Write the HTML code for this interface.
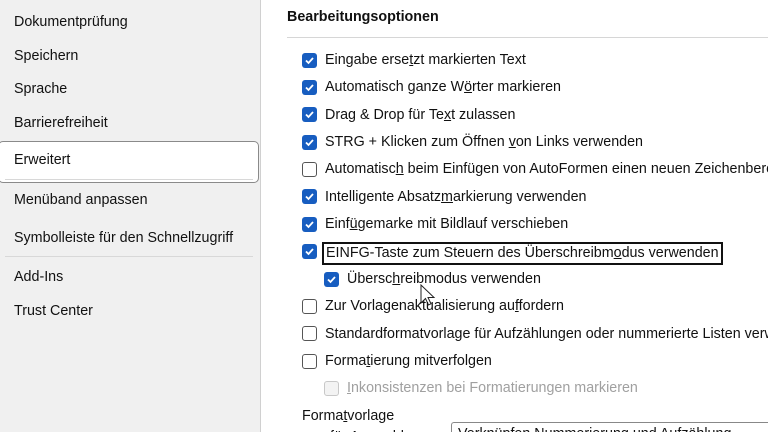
<!DOCTYPE html>
<html><head><meta charset="utf-8"><style>
*{margin:0;padding:0;box-sizing:border-box}
html,body{width:768px;height:432px;overflow:hidden}
body{background:#fff;font-family:"Segoe UI","Liberation Sans",sans-serif;font-size:14px;color:#111;position:relative}
#wrap{position:absolute;left:0;top:0;width:768px;height:432px;overflow:hidden}
#side{position:absolute;left:0;top:0;width:261px;height:432px;background:#f0f0f0;border-right:1px solid #d0d0d0}
.si{position:absolute;left:14px;font-size:14.3px;white-space:nowrap}
.sel{position:absolute;left:-2px;top:141px;width:261px;height:42px;background:#fff;border:1px solid #8a8a8a;border-radius:5px}
.sep{position:absolute;left:5px;width:248px;height:1px;background:#d8d8d8}
h3{position:absolute;left:287px;top:9px;font-size:14.3px;font-weight:bold}
.hl{position:absolute;left:287px;top:37px;width:481px;height:1px;background:#d6d6d6}
.r{position:absolute;white-space:nowrap;font-size:14.3px;line-height:18px}
.cb{position:absolute;width:15px;height:15px;border-radius:3px;background:#175dc0}
.cb svg{position:absolute;left:2px;top:2px}
.cu{position:absolute;width:15px;height:15px;border-radius:3px;border:1px solid #555;background:#fff}
.cd{border-color:#c8c8c8;background:#f3f3f3}
u{text-decoration:underline}
</style></head><body><div id="wrap">
<div id="side">
<div class="si" style="top:14px">Dokumentprüfung</div>
<div class="si" style="top:48px">Speichern</div>
<div class="si" style="top:81px">Sprache</div>
<div class="si" style="top:115px">Barrierefreiheit</div>
<div class="sel"></div>
<div class="si" style="top:152px">Erweitert</div>
<div class="sep" style="top:179px"></div>
<div class="si" style="top:192px">Menüband anpassen</div>
<div class="si" style="top:230px">Symbolleiste für den Schnellzugriff</div>
<div class="sep" style="top:256px"></div>
<div class="si" style="top:269px">Add-Ins</div>
<div class="si" style="top:303px">Trust Center</div>
</div>
<h3>Bearbeitungsoptionen</h3>
<div class="hl"></div>

<div class="cb" style="left:302px;top:53px"><svg width="11" height="11"><path d="M2 5.5l2.5 2.5L9 3" stroke="#fff" stroke-width="1.8" fill="none"/></svg></div>
<div class="r" style="left:325px;top:51px">Eingabe erse<u>t</u>zt markierten Text</div>
<div class="cb" style="left:302px;top:80px"><svg width="11" height="11"><path d="M2 5.5l2.5 2.5L9 3" stroke="#fff" stroke-width="1.8" fill="none"/></svg></div>
<div class="r" style="left:325px;top:78px">Automatisch ganze W<u>ö</u>rter markieren</div>
<div class="cb" style="left:302px;top:107px"><svg width="11" height="11"><path d="M2 5.5l2.5 2.5L9 3" stroke="#fff" stroke-width="1.8" fill="none"/></svg></div>
<div class="r" style="left:325px;top:106px">Drag &amp; Drop für Te<u>x</u>t zulassen</div>
<div class="cb" style="left:302px;top:135px"><svg width="11" height="11"><path d="M2 5.5l2.5 2.5L9 3" stroke="#fff" stroke-width="1.8" fill="none"/></svg></div>
<div class="r" style="left:325px;top:133px">STRG + Klicken zum Öffnen <u>v</u>on Links verwenden</div>
<div class="cu" style="left:302px;top:162px"></div>
<div class="r" style="left:325px;top:160px">Automatisc<u>h</u> beim Einfügen von AutoFormen einen neuen Zeichenbereich</div>
<div class="cb" style="left:302px;top:189px"><svg width="11" height="11"><path d="M2 5.5l2.5 2.5L9 3" stroke="#fff" stroke-width="1.8" fill="none"/></svg></div>
<div class="r" style="left:325px;top:188px">Intelligente Absatz<u>m</u>arkierung verwenden</div>
<div class="cb" style="left:302px;top:217px"><svg width="11" height="11"><path d="M2 5.5l2.5 2.5L9 3" stroke="#fff" stroke-width="1.8" fill="none"/></svg></div>
<div class="r" style="left:325px;top:215px">Einf<u>ü</u>gemarke mit Bildlauf verschieben</div>
<div class="cb" style="left:302px;top:244px"><svg width="11" height="11"><path d="M2 5.5l2.5 2.5L9 3" stroke="#fff" stroke-width="1.8" fill="none"/></svg></div>
<div class="r" style="left:322px;top:242px;border:2px solid #111;padding:0 2px;height:23px;line-height:19px">EINFG-Taste zum Steuern des Überschreibm<u>o</u>dus verwenden</div>
<div class="cb" style="left:324px;top:272px"><svg width="11" height="11"><path d="M2 5.5l2.5 2.5L9 3" stroke="#fff" stroke-width="1.8" fill="none"/></svg></div>
<div class="r" style="left:347px;top:270px">Übersc<u>h</u>reibmodus verwenden</div>
<svg style="position:absolute;left:420px;top:284px" width="18" height="24"><path d="M1 1v18l4.5-4.5 3 6.5 2.5-1.2-3-6.3h6z" fill="#fff" stroke="#222" stroke-width="1"/></svg>
<div class="cu" style="left:302px;top:299px"></div>
<div class="r" style="left:325px;top:297px">Zur Vorlagenaktualisierung au<u>f</u>fordern</div>
<div class="cu" style="left:302px;top:326px"></div>
<div class="r" style="left:325px;top:325px">Standardformatvorlage für Aufzählungen oder nummerierte Listen verwenden</div>
<div class="cu" style="left:302px;top:354px"></div>
<div class="r" style="left:325px;top:352px">Forma<u>t</u>ierung mitverfolgen</div>
<div class="cu cd" style="left:324px;top:381px"></div>
<div class="r" style="left:347px;top:379px;color:#a0a0a0"><u>I</u>nkonsistenzen bei Formatierungen markieren</div>
<div class="r" style="left:302px;top:407px">Forma<u>t</u>vorlage</div>
<div class="r" style="left:330px;top:428px">für Auswahl</div>
<div style="position:absolute;left:451px;top:422px;width:317px;height:20px;border:1px solid #888;border-right:none;border-radius:3px 0 0 3px;background:#fff;padding:3px 6px;font-size:14.3px;white-space:nowrap;overflow:hidden">Verknüpfen Nummerierung und Aufzählung</div>
</div></body></html>
